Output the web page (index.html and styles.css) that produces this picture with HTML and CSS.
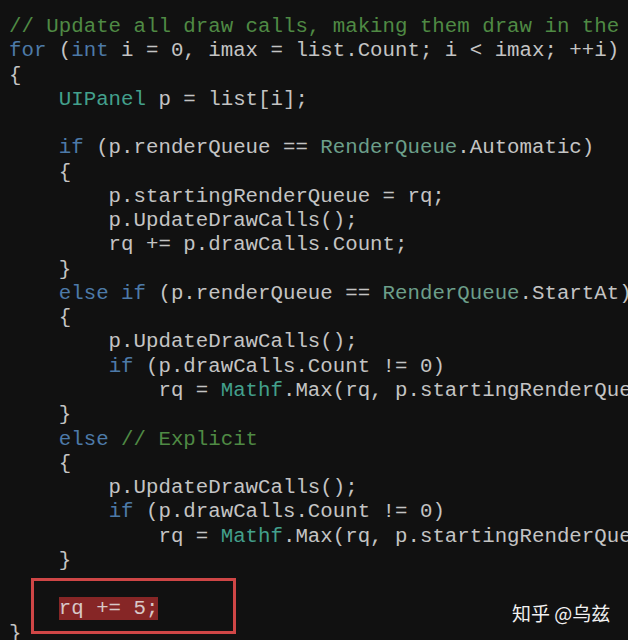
FILE: index.html
```html
<!DOCTYPE html>
<html>
<head>
<meta charset="utf-8">
<link rel="stylesheet" href="styles.css">
</head>
<body>
<div class="screen">
<pre class="code"><span class="cm">// Update all draw calls, making them draw in the right order</span>
<span class="kw">for</span> (<span class="kw">int</span> i = 0, imax = list.Count; i &lt; imax; ++i)
{
    <span class="ty">UIPanel</span> p = list[i];

    <span class="kw">if</span> (p.renderQueue == <span class="ty2">RenderQueue</span>.Automatic)
    {
        p.startingRenderQueue = rq;
        p.UpdateDrawCalls();
        rq += p.drawCalls.Count;
    }
    <span class="kw">else if</span> (p.renderQueue == <span class="ty2">RenderQueue</span>.StartAt)
    {
        p.UpdateDrawCalls();
        <span class="kw">if</span> (p.drawCalls.Count != 0)
            rq = <span class="ty">Mathf</span>.Max(rq, p.startingRenderQueue + p.drawCalls.Count);
    }
    <span class="kw">else</span> <span class="cm">// Explicit</span>
    {
        p.UpdateDrawCalls();
        <span class="kw">if</span> (p.drawCalls.Count != 0)
            rq = <span class="ty">Mathf</span>.Max(rq, p.startingRenderQueue + p.drawCalls.Count);
    }

    <span class="hl">rq += 5;</span>
}</pre>
<div class="mark"></div>
<div class="watermark">知乎 @乌兹</div>
</div>
</body>
</html>
```
FILE: styles.css
```css
html, body {
  margin: 0;
  padding: 0;
  background: #111111;
  overflow: hidden;
}
.screen {
  position: relative;
  width: 628px;
  height: 640px;
  overflow: hidden;
  background: #111111;
}
.code {
  margin: 0;
  padding: 15px 0 0 9px;
  font-family: "Liberation Mono", "Courier New", monospace;
  font-size: 20.75px;
  line-height: 24.27px;
  color: #c4c4c4;
  white-space: pre;
}
.kw { color: #4d7aa8; }
.cm { color: #4f8a44; }
.ty { color: #43a08c; }
.ty2 { color: #6c9f8a; }
.hl {
  background: #862626;
  color: #d8c8c8;
}
.mark {
  position: absolute;
  left: 31px;
  top: 578px;
  width: 199px;
  height: 50px;
  border: 3px solid #cf4646;
}
.watermark {
  position: absolute;
  left: 512px;
  top: 600px;
  font-family: "Noto Sans CJK SC", "Noto Sans", sans-serif;
  font-size: 19px;
  line-height: 26px;
  color: #f2f2f2;
}
```
